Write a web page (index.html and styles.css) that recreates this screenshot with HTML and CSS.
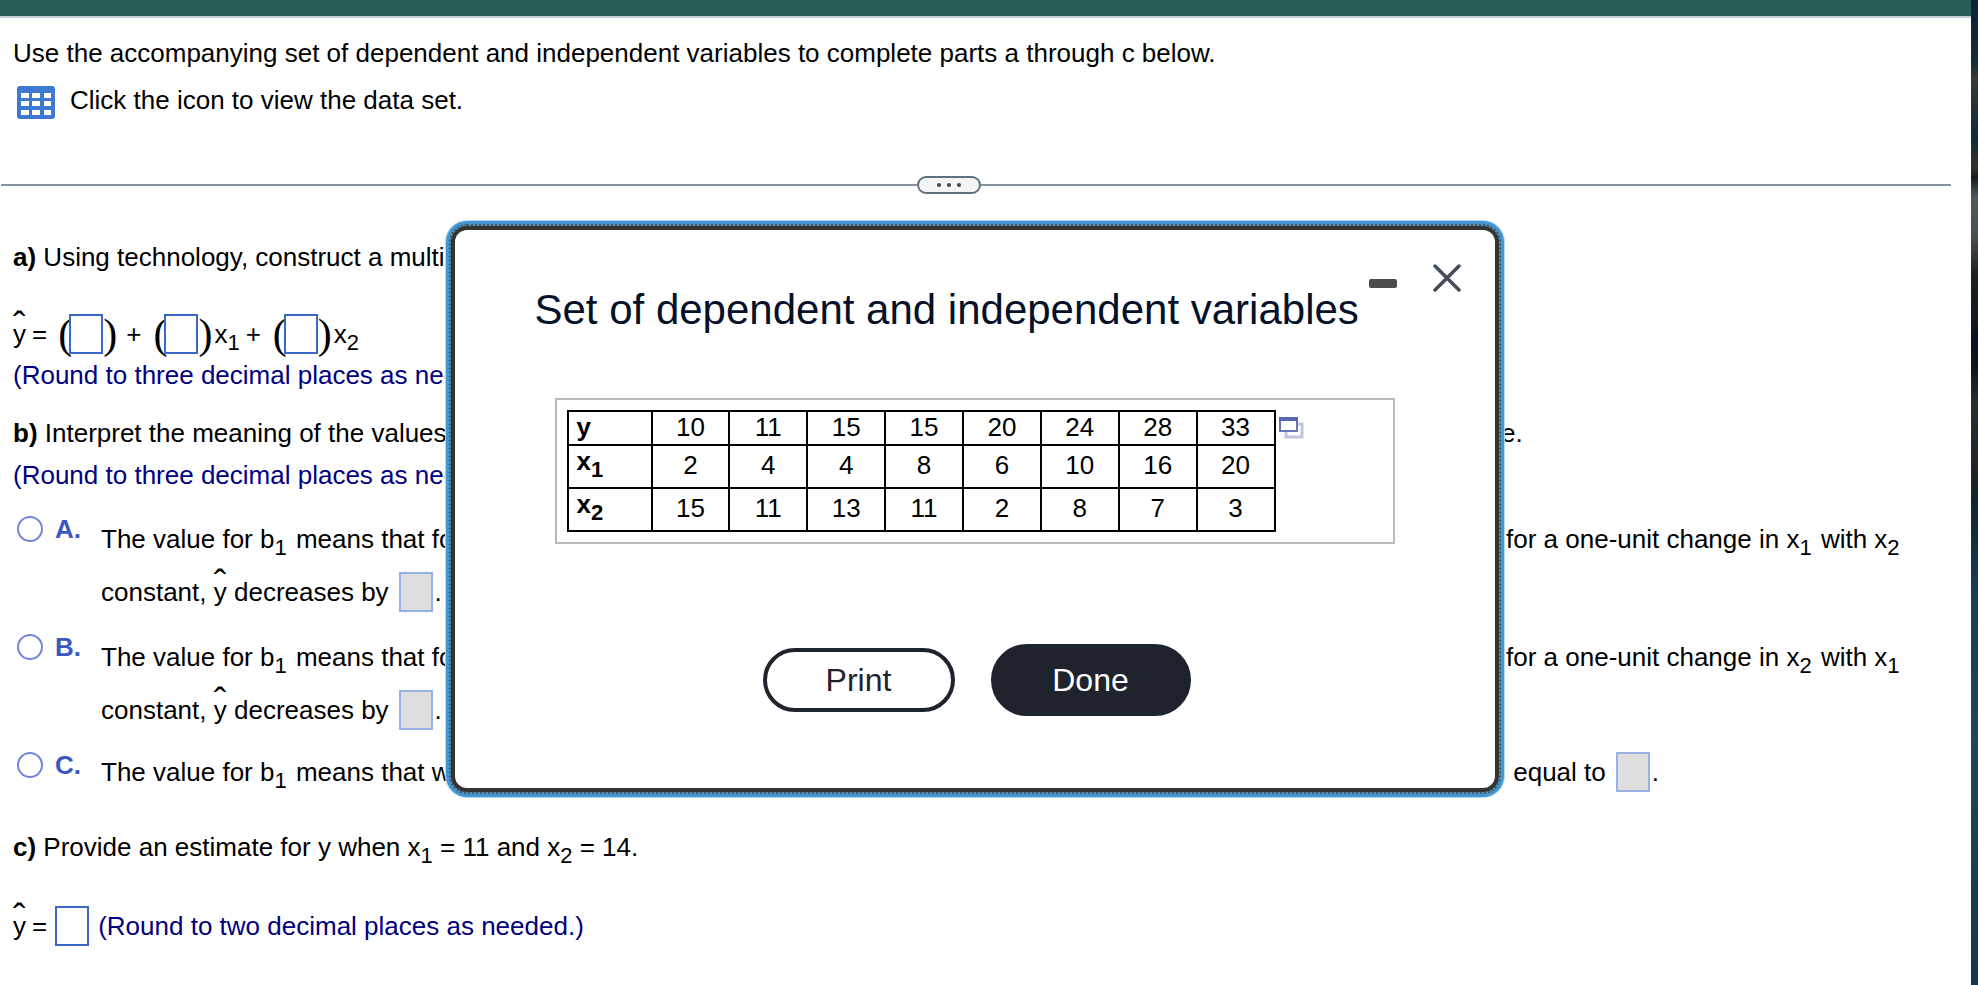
FILE: index.html
```html
<!DOCTYPE html>
<html lang="en">
<head>
    <meta charset="UTF-8">
    <meta name="viewport" content="width=device-width, initial-scale=1.0">
    <title>Set of dependent and independent variables</title>
    <link rel="stylesheet" href="styles.css">
</head>
<body>
    <div class="page">
        <div class="top-bar"></div>

        <main class="content">
            <p class="line">Use the accompanying set of dependent and independent variables to complete parts a through c below.</p>
            <a class="data-link" href="#data-set">
                <svg class="grid-icon" viewBox="0 0 38 33" aria-hidden="true">
                    <rect width="38" height="33" rx="3" fill="#3f7ad2"/>
                    <g fill="#fff">
                        <rect x="4" y="7" width="8" height="5"/><rect x="15" y="7" width="8" height="5"/><rect x="27" y="7" width="7" height="5"/>
                        <rect x="4" y="15" width="8" height="5"/><rect x="15" y="15" width="8" height="5"/><rect x="27" y="15" width="7" height="5"/>
                        <rect x="4" y="24" width="8" height="5"/><rect x="15" y="24" width="8" height="5"/><rect x="27" y="24" width="7" height="5"/>
                    </g>
                </svg>
                <span>Click the icon to view the data set.</span>
            </a>
        </main>

        <div class="divider">
            <button class="divider-btn" aria-label="Resize"><i></i><i></i><i></i></button>
        </div>

        <section class="questions">
            <p class="line part-a"><b>a)</b> Using technology, construct a multiple regression equation.</p>

            <div class="row equation">
                <span class="hat">y</span><span class="eq">=</span>
                <span class="paren">(</span><input class="box" type="text" aria-label="Intercept"><span class="paren">)</span>
                <span class="plus">+</span>
                <span class="paren">(</span><input class="box" type="text" aria-label="Coefficient of x1"><span class="paren">)</span>
                <span class="term">x<sub>1</sub></span>
                <span class="plus second">+</span>
                <span class="paren">(</span><input class="box" type="text" aria-label="Coefficient of x2"><span class="paren">)</span>
                <span class="term">x<sub>2</sub></span>
            </div>
            <p class="line hint">(Round to three decimal places as needed.)</p>

            <div class="split line part-b">
                <span class="start"><b>b)</b> Interpret the meaning of the values of the coefficients.</span>
                <span class="end">e.</span>
            </div>
            <p class="line hint hint-b">(Round to three decimal places as needed.)</p>

            <div class="option">
                <input type="radio" name="meaning" id="opt-a">
                <label for="opt-a">A.</label>
                <div class="answer">
                    <div class="split">
                        <span class="start">The value for b<sub>1</sub> means that for</span>
                        <span class="end">for a one-unit change in x<sub>1</sub> with x<sub>2</sub></span>
                    </div>
                    <div class="row">constant,&nbsp;<span class="hat">y</span>&nbsp;decreases by <input class="box" type="text" aria-label="Decrease in A" disabled>.</div>
                </div>
            </div>
            <div class="option">
                <input type="radio" name="meaning" id="opt-b">
                <label for="opt-b">B.</label>
                <div class="answer">
                    <div class="split">
                        <span class="start">The value for b<sub>1</sub> means that for</span>
                        <span class="end">for a one-unit change in x<sub>2</sub> with x<sub>1</sub></span>
                    </div>
                    <div class="row">constant,&nbsp;<span class="hat">y</span>&nbsp;decreases by <input class="box" type="text" aria-label="Decrease in B" disabled>.</div>
                </div>
            </div>
            <div class="option last">
                <input type="radio" name="meaning" id="opt-c">
                <label for="opt-c">C.</label>
                <div class="answer">
                    <div class="split">
                        <span class="start">The value for b<sub>1</sub> means that when</span>
                        <span class="end row">&nbsp;equal to <input class="box" type="text" aria-label="Value in C" disabled>.</span>
                    </div>
                </div>
            </div>

            <p class="line part-c"><b>c)</b> Provide an estimate for y when x<sub>1</sub> = 11 and x<sub>2</sub> = 14.</p>
            <div class="row estimate">
                <span class="hat">y</span><span class="eq">=</span>
                <input class="box" type="text" aria-label="Estimate for y">
                <span class="hint">(Round to two decimal places as needed.)</span>
            </div>
        </section>

        <div class="overlay">
            <div class="dialog" role="dialog" aria-labelledby="dialog-title">
                <div class="window-controls">
                    <button class="minimize" aria-label="Minimize"></button>
                    <button class="close" aria-label="Close">
                        <svg viewBox="0 0 28 28"><path d="M2 2L26 26M26 2L2 26" stroke="#434d59" stroke-width="3.5" stroke-linecap="round"/></svg>
                    </button>
                </div>
                <h2 id="dialog-title">Set of dependent and independent variables</h2>

                <div class="data-box" id="data-set">
                    <table>
                        <tr><th>y</th><td>10</td><td>11</td><td>15</td><td>15</td><td>20</td><td>24</td><td>28</td><td>33</td></tr>
                        <tr><th>x<sub>1</sub></th><td>2</td><td>4</td><td>4</td><td>8</td><td>6</td><td>10</td><td>16</td><td>20</td></tr>
                        <tr><th>x<sub>2</sub></th><td>15</td><td>11</td><td>13</td><td>11</td><td>2</td><td>8</td><td>7</td><td>3</td></tr>
                    </table>
                    <button class="copy" aria-label="Copy data">
                        <svg viewBox="0 0 25 22">
                            <path d="M7 15V20H23V7H18" fill="none" stroke="#c0c5e2" stroke-width="3"/>
                            <rect x="1" y="1" width="17" height="13" fill="#fff" stroke="#6975b9" stroke-width="2"/>
                            <rect x="0" y="0" width="19" height="4" fill="#5965ae"/>
                        </svg>
                    </button>
                </div>

                <div class="actions">
                    <button class="btn print">Print</button>
                    <button class="btn done">Done</button>
                </div>
            </div>
        </div>
    </div>
</body>
</html>
```
FILE: styles.css
```css
* {
    margin: 0;
    padding: 0;
    box-sizing: border-box;
}

body {
    font-family: "Liberation Sans", Arial, sans-serif;
    font-size: 26px;
    line-height: 30px;
    color: #000;
    min-height: 100vh;
    padding-right: 7px;
    /* strip of desktop wallpaper beside the page */
    background: linear-gradient(180deg, #0c2237 0, #14293c 6%, #343a35 8%, #12273b 14%, #33352b 17%, #171c1e 18%, #4c5a60 20%, #46504f 24%, #1c1f20 28%, #14191b 33%, #06131f 34%, #09151e 37%, #252f34 41%, #1c2427 48%, #10242f 51%, #163f56 60%, #1c475f 75%, #123754 100%);
}

button {
    font-family: inherit;
    cursor: pointer;
}

.page {
    position: relative;
    min-height: 100vh;
    background: #fff;
    overflow: hidden;
}

.top-bar {
    height: 18px;
    background: #275f56;
    border-bottom: 2px solid #c3cfd3;
}

.content {
    padding: 20px 13px 0;
}

.line {
    white-space: nowrap;
}

.data-link {
    display: flex;
    align-items: flex-start;
    gap: 15px;
    margin-top: 17px;
    padding-left: 4px;
    color: inherit;
    text-decoration: none;
}

.grid-icon {
    width: 38px;
    height: 33px;
    margin-top: 1px;
}

.divider {
    display: flex;
    align-items: center;
    height: 18px;
    margin: 57px 20px 0 1px;
}

.divider::before,
.divider::after {
    content: "";
    flex: 1 1 0;
    height: 2px;
    background: #8792a2;
}

.divider::after {
    flex-basis: 54px;
}

.divider-btn {
    display: flex;
    align-items: center;
    justify-content: center;
    gap: 6px;
    width: 64px;
    height: 18px;
    border: 2px solid #617080;
    border-radius: 9px;
    background: #f2f4f5;
}

.divider-btn i {
    width: 4px;
    height: 4px;
    border-radius: 50%;
    background: #444;
}

.questions {
    padding: 48px 13px 0;
}

.row {
    display: flex;
    align-items: center;
    line-height: 40px;
    white-space: nowrap;
}

sub {
    font-size: 22px;
    line-height: 0;
    vertical-align: -7px;
    margin-right: 2px;
}

.hat {
    position: relative;
}

.hat::before {
    content: "ˆ";
    position: absolute;
    top: -8px;
    left: 0;
    font-size: 38px;
}

.eq {
    margin: 0 8px 0 6px;
}

.equation .eq {
    margin-right: 11px;
}

.box {
    width: 34px;
    height: 40px;
    border: 2px solid #3b68c6;
    background: #fff;
    font-size: 22px;
    text-align: center;
}

.box:disabled {
    border-color: #9bb0e4;
    background: #dedede;
}

.paren {
    width: 11px;
    font-family: "Liberation Serif", "Times New Roman", serif;
    font-size: 42px;
}

.plus {
    margin: 0 12px;
}

.plus.second {
    margin-left: 4px;
}

.term {
    margin-left: 5px;
}

.equation {
    margin-top: 42px;
}

.hint {
    color: #000080;
}

.equation + .hint {
    margin-top: 6px;
}

.part-b {
    margin-top: 28px;
}

.hint-b {
    margin: 12px 0 26px;
}

/* left text runs under the dialog, right text starts at its far edge */
.split {
    display: flex;
    line-height: 40px;
    white-space: nowrap;
}

.split.line {
    line-height: 30px;
}

.split .start {
    flex: 1;
}

.split .end {
    width: 452px;
}

.split.line .end {
    width: 457px;
}

.option {
    display: flex;
    margin-bottom: 22px;
    padding-left: 4px;
}

.option input[type="radio"] {
    appearance: none;
    width: 26px;
    height: 26px;
    border: 2px solid #7387d8;
    border-radius: 50%;
    background: #fff;
}

.option label {
    width: 46px;
    margin-left: 12px;
    line-height: 26px;
    font-weight: bold;
    color: #3d57c2;
}

.answer {
    flex: 1;
    padding-top: 3px;
}

.option.last .answer {
    padding-top: 0;
}

.answer > .row {
    margin-top: 13px;
}

.answer .box {
    margin: 0 2px 0 10px;
}

.part-c {
    margin-top: 40px;
}

.part-c sub {
    margin-right: 0;
}

.estimate {
    margin-top: 44px;
}

.estimate .hint {
    margin-left: 9px;
}

.overlay {
    position: absolute;
    top: 226px;
    left: 0;
    right: 22px;
    display: flex;
    justify-content: center;
}

.dialog {
    position: relative;
    width: 1048px;
    padding: 54px 80px 72px 100px;
    border: 4px solid #333;
    border-radius: 16px;
    outline: 2px dotted #555;
    box-shadow: 0 0 0 5px #4296d2, 0 0 0 6px #b5d9ee;
    background: #fff;
}

.window-controls {
    position: absolute;
    top: 34px;
    right: 34px;
    display: flex;
    align-items: center;
    gap: 36px;
}

.minimize {
    width: 28px;
    height: 9px;
    margin-top: 10px;
    border: none;
    border-radius: 2px;
    background: #4d4d4d;
}

.close {
    width: 28px;
    height: 28px;
    border: none;
    background: none;
}

.close svg,
.copy svg {
    display: block;
    width: 100%;
}

.dialog h2 {
    margin-left: -20px;
    font-size: 42px;
    line-height: 52px;
    font-weight: normal;
    white-space: nowrap;
    color: #051029;
}

.data-box {
    display: flex;
    align-items: flex-start;
    width: 840px;
    margin-top: 62px;
    padding: 10px;
    border: 2px solid #b9b9b9;
}

table {
    border-collapse: collapse;
    table-layout: fixed;
    width: 709px;
}

th,
td {
    border: 2px solid #000;
    height: 43px;
    line-height: 30px;
    text-align: center;
    vertical-align: top;
    padding-top: 4px;
}

th {
    width: 84px;
    padding: 0 0 0 8px;
    text-align: left;
}

tr:first-child td,
tr:first-child th {
    height: 34px;
    padding-top: 0;
}

.copy {
    width: 25px;
    height: 22px;
    margin: 7px 0 0 3px;
    border: none;
    background: none;
}

.actions {
    display: flex;
    align-items: center;
    justify-content: center;
    gap: 36px;
    margin: 100px 16px 0 0;
}

.btn {
    width: 192px;
    height: 64px;
    border: 4px solid #1f232e;
    border-radius: 36px;
    background: #fff;
    font-size: 32px;
    color: #1f232e;
}

.btn.done {
    width: 200px;
    height: 72px;
    background: #1f232e;
    color: #fff;
}
```
